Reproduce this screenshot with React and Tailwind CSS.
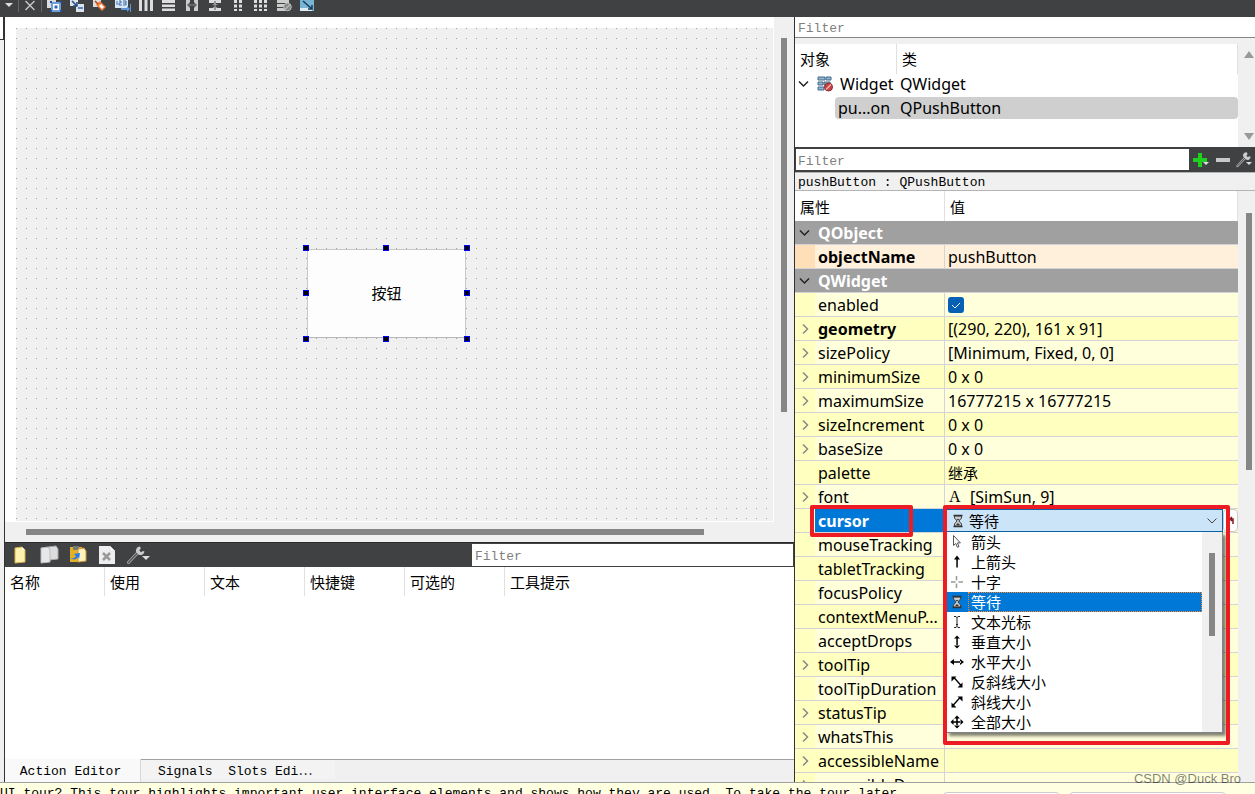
import React, { useState } from 'react';

const objectProps = [{ name: 'objectName', value: 'pushButton', bold: true }];

const widgetProps = [
  { name: 'enabled', type: 'check' },
  { name: 'geometry', value: '[(290, 220), 161 x 91]', bold: true, expandable: true },
  { name: 'sizePolicy', value: '[Minimum, Fixed, 0, 0]', expandable: true },
  { name: 'minimumSize', value: '0 x 0', expandable: true },
  { name: 'maximumSize', value: '16777215 x 16777215', expandable: true },
  { name: 'sizeIncrement', value: '0 x 0', expandable: true },
  { name: 'baseSize', value: '0 x 0', expandable: true },
  { name: 'palette', value: '继承', cjk: true },
  { name: 'font', value: '[SimSun, 9]', type: 'font', expandable: true },
  { name: 'cursor', type: 'cursor', bold: true },
  { name: 'mouseTracking' },
  { name: 'tabletTracking' },
  { name: 'focusPolicy' },
  { name: 'contextMenuP...' },
  { name: 'acceptDrops' },
  { name: 'toolTip', expandable: true },
  { name: 'toolTipDuration' },
  { name: 'statusTip', expandable: true },
  { name: 'whatsThis', expandable: true },
  { name: 'accessibleName', expandable: true },
  { name: 'accessibleD...', expandable: true },
];

const cursors = [
  { label: '箭头', icon: 'arrow' },
  { label: '上箭头', icon: 'up' },
  { label: '十字', icon: 'cross' },
  { label: '等待', icon: 'wait' },
  { label: '文本光标', icon: 'ibeam' },
  { label: '垂直大小', icon: 'vertical' },
  { label: '水平大小', icon: 'horizontal' },
  { label: '反斜线大小', icon: 'backslash' },
  { label: '斜线大小', icon: 'slash' },
  { label: '全部大小', icon: 'all' },
];

const actionColumns = ['名称', '使用', '文本', '快捷键', '可选的', '工具提示'];

const cursorShapes = {
  arrow: <path d="M4.5 1.5v10l2.3-2 1.6 3.8 1.6-.8-1.6-3.6h3z" fill="#fff" stroke="#555" />,
  up: <path d="M7.300 3h1.500v10.500H7.300zM5 5.500l3-4 3 4z" fill="#000" />,
  cross: <path d="M7.500 2v4.500M7.500 9.500v4.500M2 8h4.500M9.500 8h4.500" stroke="#999" strokeWidth="1.500" />,
  wait: (
    <g>
      <path d="M4.500 3v2l2.500 3-2.500 3v2h7v-2L9 8l2.500-3V3z" fill="#c8ccd0" stroke="#444" />
      <path d="M3.500 2.500h9M3.500 13.500h9" stroke="#333" strokeWidth="1.500" />
      <path d="M6.500 6h3L8 7.500zM8 10l2 2H6z" fill="#333" />
    </g>
  ),
  ibeam: <path d="M5 2.500h2l1 1 1-1h2M8 3v10M5 13.500h2l1-1 1 1h2M7 10.500h2" stroke="#222" fill="none" />,
  vertical: <path d="M7.300 4h1.500v8H7.300zM8 1.500l3 3H5zM8 14.500l3-3H5z" fill="#000" />,
  horizontal: <path d="M4 7.200h8v1.600H4zM1 8l4-3v6zM15 8l-4-3v6z" fill="#000" />,
  backslash: <path d="M4 3.500L5 2.500l8 9-1 1zM2.500 2.500h5l-5 5zM13.500 13.500h-5l5-5z" fill="#000" />,
  slash: <path d="M12 3.500L11 2.500l-8 9 1 1zM13.500 2.500h-5l5 5zM2.500 13.500h5l-5-5z" fill="#000" />,
  all: (
    <path
      d="M7.200 4h1.600v8H7.200zM4 7.200h8v1.600H4zM8 1.500l3 3H5zM8 14.500l3-3H5zM1.500 8l3-3v6zM14.500 8l-3-3v6z"
      fill="#000"
    />
  ),
};

function CursorIcon({ name }) {
  return (
    <svg className="h-4 w-4 shrink-0" viewBox="0 0 16 16">
      {cursorShapes[name]}
    </svg>
  );
}

function Chevron({ open }) {
  return (
    <svg className="mx-auto h-3 w-3" viewBox="0 0 12 12" fill="none" strokeWidth="1.500">
      {open ? <path d="M1 3.500L5.500 8 10 3.500" stroke="#222" /> : <path d="M4 1.500L8.500 6 4 10.500" stroke="#888" />}
    </svg>
  );
}

function Wrench() {
  return (
    <svg className="h-5 w-5" viewBox="0 0 20 20">
      <path d="M2.500 17.500l9-9.500" stroke="#aaa" strokeWidth="3" strokeLinecap="round" />
      <path d="M2.500 17.500l9-9.500" stroke="#505050" strokeWidth="1.200" strokeLinecap="round" />
      <path d="M14 1.500a4 4 0 00-3.500 6l2 2a4 4 0 006-3l-1.500-.5-2 1.200-1.700-1.700 1.500-2z" fill="#ccc" />
    </svg>
  );
}

function DownArrow() {
  return (
    <svg className="h-1 w-2" viewBox="0 0 8 4">
      <path d="M0 0h8L4 4z" fill="#ddd" />
    </svg>
  );
}

// Only the lower part of the icons shows, the toolbar is scrolled under the window top
const toolIcons = [
  { label: 'Edit Widgets', draw: <><path d="M1 3h9v9H1z" fill="#ddd" /><path d="M5 6h10v10H5z" fill="#6f9fd8" /><path d="M7 8h6v6H7z" fill="#fff" /><path d="M8.500 9.500h3v3h-3z" fill="#2f63b5" /><path d="M4 5h2v2H4zM14 5h2v2h-2zM4 14h2v2H4zM14 14h2v2h-2z" fill="#2452a0" /></> },
  { label: 'Edit Signals', draw: <><path d="M1 3h8v7H1zM7 8h8v8H7z" fill="#dce3ea" /><path d="M3 5l5 5M8 6v4H4" stroke="#244a87" strokeWidth="1.500" fill="none" /><path d="M9 12h5" stroke="#5787c6" strokeWidth="2" /></> },
  { label: 'Edit Buddies', draw: <><path d="M1 3h8v8H1z" fill="#ddd" /><path d="M8 5l6 6-4 4-6-6z" fill="#f27b35" /><path d="M9 8l3 3-2 2-3-3z" fill="#fff" /><path d="M3 5l3 3" stroke="#b43e1b" strokeWidth="1.500" /></> },
  { label: 'Edit Tab Order', draw: <><path d="M0 3h13v9H0z" fill="#d9e7f5" /><path d="M2 5v4M4 5h2v2H4v2h3M8 5h3v4H8M8 7h3" stroke="#3e70aa" fill="none" /><path d="M6 12h6v-2l3 3-3 3v-2H6zM15 8h1v8h-1z" fill="#5c96d8" /></> },
  { label: 'Lay Out Horizontally', draw: <path d="M1 2h3v13H1zM6.500 2h3v13h-3zM12 2h3v13h-3z" fill="#ddd" /> },
  { label: 'Lay Out Vertically', draw: <path d="M1 4h13v3H1zM1 8.500h13v2.500H1zM1 12.500h13V15H1z" fill="#ddd" /> },
  { label: 'Horizontal Splitter', draw: <><path d="M2 2h4v13H2zM10 2h4v13h-4z" fill="#ccc" /><path d="M3 9l3-3v2h4V6l3 3-3 3v-2H6v2z" fill="#666" /></> },
  { label: 'Vertical Splitter', draw: <><path d="M2 4h12v3H2zM2 12h12v3H2z" fill="#ddd" /><path d="M7 5h2v3h2l-3 2-3-2h2zM7 14h2v-2h2l-3-2-3 2h2z" fill="#999" /></> },
  { label: 'Form Layout', draw: <path d="M4 4h3v3H4zM9 4h3v3H9zM4 8.500h3v3H4zM9 8.500h3v3H9zM4 13h3v2H4zM9 13h3v2H9z" fill="#ddd" /> },
  { label: 'Grid Layout', draw: <path d="M1 4h3v3H1zM6 4h3v3H6zM11 4h3v3h-3zM1 8.500h3v3H1zM6 8.500h3v3H6zM11 8.500h3v3h-3zM1 13h3v2H1zM6 13h3v2H6zM11 13h3v2h-3z" fill="#ddd" /> },
  { label: 'Break Layout', draw: <><path d="M1 4h12v3H1zM1 8h10v3H1zM1 12h9v3H1z" fill="#ccc" /><circle cx="11.500" cy="11" r="3.800" fill="#888" stroke="#bbb" /><path d="M9 13.500l5-5" stroke="#ddd" /></> },
  { label: 'Adjust Size', draw: <><path d="M1 2h14v13H1z" fill="#78b5d5" /><path d="M1 12h12v3H1z" fill="#dceef5" /><path d="M4 5l9 8M13 9v4H9" stroke="#183d58" strokeWidth="1.500" fill="none" /></> },
];

function TopToolbar() {
  return (
    <div className="flex h-[17px] shrink-0 items-start bg-[#404142] pl-[5px]">
      <button type="button" aria-label="More" className="mt-[3px] flex"><DownArrow /></button>
      <span className="ml-[5px] h-3 w-px bg-[#666]" />
      <button type="button" aria-label="Close" className="mx-[5px]">
        <svg className="h-3 w-3" viewBox="0 0 12 12">
          <path d="M1.500 1l9 9M10.500 1l-9 9" stroke="#ccc" strokeWidth="1.300" />
        </svg>
      </button>
      <span className="h-3 w-px bg-[#666]" />
      <div className="ml-1 flex gap-[7px]">
        {toolIcons.map((tool) => (
          <button key={tool.label} type="button" aria-label={tool.label}>
            <svg className="h-3 w-4" viewBox="0 4 16 12">{tool.draw}</svg>
          </button>
        ))}
      </div>
    </div>
  );
}

function FormEditor() {
  const handle = 'absolute h-[6px] w-[6px] border border-[#0000ff] bg-black';
  return (
    <div className="flex min-h-0 flex-1 flex-col bg-[#f0f0f0]">
      <div className="flex min-h-0 flex-1">
        <div className="flex min-w-0 flex-1 bg-white pt-[11px] pr-px pb-px pl-[11px]">
          <div className="relative flex-1 bg-[#f0f0f0] bg-[conic-gradient(at_1px_1px,transparent_75%,#a0a0a0_0)] bg-[length:10px_10px]">
            <div className="absolute top-[220px] left-[290px] flex h-[91px] w-[161px] p-px">
              <button type="button" className="flex-1 border border-[#c8c8c8] border-b-[#b8b8b8] bg-[#fdfdfd] text-[15px]">
                按钮
              </button>
              <span className={`${handle} -top-[3px] -left-[3px]`} />
              <span className={`${handle} -top-[3px] left-[77px]`} />
              <span className={`${handle} -top-[3px] -right-[3px]`} />
              <span className={`${handle} top-[42px] -left-[3px]`} />
              <span className={`${handle} top-[42px] -right-[3px]`} />
              <span className={`${handle} -bottom-[3px] -left-[3px]`} />
              <span className={`${handle} -bottom-[3px] left-[77px]`} />
              <span className={`${handle} -right-[3px] -bottom-[3px]`} />
            </div>
          </div>
        </div>
        <div className="w-5 shrink-0 px-[7px] pt-[21px]">
          <div className="h-[374px] w-[6px] bg-[#868686]" />
        </div>
      </div>
      <div className="h-5 shrink-0 pt-[7px] pr-[90px] pl-[21px]">
        <div className="h-[6px] bg-[#868686]" />
      </div>
    </div>
  );
}

function ActionEditor() {
  return (
    <div className="flex h-[240px] shrink-0 flex-col">
      <div className="flex h-[25px] shrink-0 border-t border-[#2b2b2b] bg-[#404142]">
        <div className="flex flex-1 items-center gap-[9px] pl-[5px]">
          <button type="button" aria-label="New">
            <svg className="h-5 w-5" viewBox="0 0 20 20">
              <path d="M5 3l7-1 3 3v12l-10 1z" fill="#fff1ae" stroke="#d9b44a" />
              <path d="M12 2v3h3z" fill="#fff" />
            </svg>
          </button>
          <button type="button" aria-label="Copy">
            <svg className="h-5 w-5" viewBox="0 0 20 20">
              <path d="M9 2l8-1 2 3v10l-9 1z" fill="#ddd" stroke="#aaa" />
              <path d="M2 3l7-1 2 3v12l-9 1z" fill="#e8e8e8" stroke="#bbb" />
            </svg>
          </button>
          <button type="button" aria-label="Paste">
            <svg className="h-5 w-5" viewBox="0 0 20 20">
              <path d="M2 2h12v15H2z" fill="#e3b128" />
              <path d="M5 1h6v4H5z" fill="#777" />
              <path d="M10 4l6-1 2 3v10l-8 1z" fill="#fff0c0" stroke="#c99a38" />
              <path d="M2 13c3 1 5 0 6-2L6 9l6-1-1 6-1-2c-2 3-5 3-8 1z" fill="#217bea" />
            </svg>
          </button>
          <button type="button" aria-label="Delete">
            <svg className="h-5 w-5" viewBox="0 0 20 20">
              <path d="M2 1h11l5 5v13H2z" fill="#eee" />
              <path d="M13 1v5h5z" fill="#fff" stroke="#ccc" strokeWidth=".5" />
              <path d="M6 8l7 7M13 8l-7 7" stroke="#999" strokeWidth="2.500" />
            </svg>
          </button>
          <button type="button" aria-label="Configure" className="flex items-end">
            <Wrench />
            <span className="-ml-1 flex pb-[5px]"><DownArrow /></span>
          </button>
        </div>
        <input
          type="text"
          aria-label="Filter actions"
          placeholder="Filter"
          className="my-px mr-px w-[321px] bg-white pt-[3px] pl-[3px] font-['Liberation_Mono','Noto_Sans_CJK_SC',monospace] text-[13px] outline-none placeholder:text-[#808080]"
        />
      </div>
      <div className="min-h-0 flex-1 bg-white">
        <table className="w-full table-fixed border-separate border-spacing-0">
          <thead>
            <tr className="h-[29px] text-left text-[15px]">
              {actionColumns.map((column) => (
                <th key={column} className="w-[100px] border-r border-[#e0e0e0] pt-[2px] pl-[5px] font-normal last:w-auto last:border-r-0">
                  {column}
                </th>
              ))}
            </tr>
          </thead>
        </table>
      </div>
      <div className="flex h-[23px] shrink-0 bg-[#f0f0f0] font-['Liberation_Mono','Noto_Sans_CJK_SC',monospace] text-[13px]">
        <button type="button" className="w-[136px] border-r border-[#d9d9d9] bg-[#f9f9f9] pt-[2px] pr-1">Action Editor</button>
        <div className="flex flex-1 border-t border-[#a0a0a0]">
          <button type="button" className="mb-[3px] w-[194px] bg-[#f3f3f3] pt-[2px] pl-[17px] text-left whitespace-pre">
            {'Signals  Slots Edi⋯'}
          </button>
        </div>
      </div>
    </div>
  );
}

function ObjectInspector() {
  return (
    <div className="shrink-0 bg-[#f0f0f0]">
      <input
        type="text"
        aria-label="Filter objects"
        placeholder="Filter"
        className="block h-[21px] w-full border-b border-[#868686] bg-white pt-[2px] pl-[3px] font-['Liberation_Mono','Noto_Sans_CJK_SC',monospace] text-[13px] outline-none placeholder:text-[#808080]"
      />
      <div className="mt-[6px] flex h-[103px]">
        <div className="min-w-0 flex-1 bg-white">
          <table className="w-full table-fixed border-separate border-spacing-0">
            <thead>
              <tr className="h-[30px] text-left text-[15px]">
                <th className="w-[102px] border-r border-[#e0e0e0] pl-[5px] font-normal">对象</th>
                <th className="border-r border-[#e0e0e0] pl-[5px] font-normal">类</th>
              </tr>
            </thead>
            <tbody className="text-[16px] leading-5">
              <tr className="h-[23px] align-top">
                <td>
                  <div className="flex items-center pl-[3px]">
                    <div className="w-3"><Chevron open /></div>
                    <svg className="ml-[7px] h-4 w-4" viewBox="0 0 16 16">
                      <path d="M1 1h7v3H1zM9 1h5v3H9zM1 6h5v3H1zM7 6h6v3H7zM1 11h6v3H1z" fill="#8fb4d2" stroke="#476b8a" />
                      <circle cx="11.500" cy="11" r="4" fill="#c84343" stroke="#8e2c2c" />
                      <path d="M9 13.500l5-5" stroke="#f3b5b5" strokeWidth="1.500" />
                    </svg>
                    <span className="ml-[7px]">Widget</span>
                  </div>
                </td>
                <td className="pl-[3px]">QWidget</td>
              </tr>
              <tr className="h-[22px]">
                <td className="pl-10">
                  <div className="rounded-l-sm bg-[#cfcfcf] py-px pl-[3px]">pu...on</div>
                </td>
                <td>
                  <div className="rounded-r-sm bg-[#cfcfcf] py-px pl-[3px]">QPushButton</div>
                </td>
              </tr>
            </tbody>
          </table>
        </div>
        <div className="flex w-[17px] shrink-0 flex-col items-end justify-between pt-[6px] pb-[6px]">
          <svg className="h-[10px] w-3" viewBox="0 0 12 10"><path d="M1 8l5-7 5 7z" fill="#999" /></svg>
          <svg className="h-[10px] w-3" viewBox="0 0 12 10"><path d="M1 2l5 7 5-7z" fill="#999" /></svg>
        </div>
      </div>
    </div>
  );
}

function CursorEditor() {
  const [cursor, setCursor] = useState('等待');
  const current = cursors.find((item) => item.label === cursor);

  return (
    <div className="flex h-[23px]">
      <div className="relative ml-px w-[277px]">
        <select
          aria-label="cursor"
          value={cursor}
          onChange={(e) => setCursor(e.target.value)}
          className="block h-[23px] w-full appearance-none border border-[#0a62a8] bg-[#cce4f7] pl-[22px] text-[15px] leading-5 outline-none"
        >
          {cursors.map((item) => (
            <option key={item.label}>{item.label}</option>
          ))}
        </select>
        <span className="pointer-events-none absolute inset-y-0 left-1 flex items-center">
          <CursorIcon name={current.icon} />
        </span>
        <svg className="pointer-events-none absolute top-[6px] right-[5px] h-3 w-3" viewBox="0 0 12 12">
          <path d="M1.500 3.500L6 8l4.500-4.500" stroke="#444" fill="none" />
        </svg>
        <div className="absolute top-[23px] left-0 z-10 flex w-full border-r border-b border-[#808488] bg-white shadow-[3px_3px_3px_rgba(0,0,0,0.5)]">
          <ul role="listbox" className="flex-1 text-[15px] leading-5">
            {cursors.map((item) => (
              <li
                key={item.label}
                role="option"
                aria-selected={item.label === cursor}
                onClick={() => setCursor(item.label)}
                className={`flex h-5 items-center pl-[3px] ${item.label === cursor ? 'bg-[#0078d7] text-white' : ''}`}
              >
                <CursorIcon name={item.icon} />
                <span className={`ml-[3px] flex h-5 flex-1 items-center border border-dotted pl-[2px] ${item.label === cursor ? 'border-[#ff8728]' : 'border-transparent'}`}>
                  {item.label}
                </span>
              </li>
            ))}
          </ul>
          <div className="w-5 shrink-0 bg-[#f0f0f0] px-[7px] pt-[21px]">
            <div className="h-[83px] w-[6px] bg-[#868686]" />
          </div>
        </div>
        <div className="pointer-events-none absolute -top-1 -left-[3px] z-20 h-[240px] w-[287px] rounded-xs border-4 border-[#ed1c24]" />
      </div>
      <button type="button" aria-label="Reset" className="flex flex-1 items-center justify-end rounded border border-[#ccc] bg-white">
        <svg className="h-3 w-3" viewBox="0 0 12 12">
          <path d="M3 4h5v5M7 2L5 4l2 2" stroke="#8b1a1a" strokeWidth="1.500" fill="none" />
        </svg>
      </button>
    </div>
  );
}

function PropertyValue({ prop }) {
  if (prop.type === 'check') {
    return (
      <label className="relative block h-4 w-4">
        <input type="checkbox" aria-label={prop.name} defaultChecked className="block h-4 w-4 appearance-none rounded-[3px] bg-[#bbb] checked:bg-[#0560b6]" />
        <svg className="pointer-events-none absolute inset-0 h-4 w-4" viewBox="0 0 16 16">
          <path d="M4 8l3 3 5-5" stroke="#fff" fill="none" />
        </svg>
      </label>
    );
  }
  if (prop.type === 'font') {
    return (
      <div className="flex items-center">
        <span className="w-[22px] pl-px font-['Liberation_Serif','Noto_Sans_CJK_SC',serif]">A</span>
        <span>{prop.value}</span>
      </div>
    );
  }
  return <span className={prop.cjk ? 'text-[15px]' : ''}>{prop.value}</span>;
}

function GroupRow({ name }) {
  return (
    <tr className="h-6 bg-[#a0a0a0] font-bold text-white">
      <td className="border-b border-[#d4d4d8]"><Chevron open /></td>
      <td colSpan={2} className="border-b border-[#d4d4d8] pl-[3px]">{name}</td>
    </tr>
  );
}

function PropertyRow({ prop, tone, indent }) {
  const selected = prop.type === 'cursor';
  return (
    <tr className={`h-6 ${tone}`}>
      <td className={`border-b border-[#d4d4d8] ${indent}`}>{prop.expandable && <Chevron />}</td>
      <td className={`relative border-r border-b border-[#d4d4d8] pl-[3px] whitespace-nowrap ${prop.bold ? 'font-bold' : ''} ${selected ? 'bg-[#0078d7] text-white' : ''}`}>
        {prop.name}
        {selected && (
          <span className="pointer-events-none absolute -top-1 -left-[5px] h-8 w-[103px] rounded-xs border-4 border-[#ed1c24]" />
        )}
      </td>
      <td className={`border-b border-[#d4d4d8] ${selected ? '' : 'pl-[3px]'}`}>
        {selected ? <CursorEditor /> : <PropertyValue prop={prop} />}
      </td>
    </tr>
  );
}

function PropertyEditor() {
  return (
    <div className="flex min-h-0 flex-1 flex-col">
      <div className="flex h-[25px] shrink-0 items-center border-y-2 border-l border-[#404142] bg-[#404142]">
        <input
          type="text"
          aria-label="Filter properties"
          placeholder="Filter"
          className="h-full min-w-0 flex-1 bg-white pt-[3px] pl-[2px] font-['Liberation_Mono','Noto_Sans_CJK_SC',monospace] text-[13px] outline-none placeholder:text-[#808080]"
        />
        <div className="flex w-[66px] shrink-0 items-center gap-[5px] pl-[3px]">
          <button type="button" aria-label="Add property">
            <svg className="h-4 w-[18px]" viewBox="0 0 18 16">
              <path d="M6 1h4v5h5v4h-5v5H6v-5H1V6h5z" fill="#1fd01f" />
              <path d="M11 10h6l-3 3z" fill="#ddd" />
            </svg>
          </button>
          <button type="button" aria-label="Remove property">
            <svg className="h-4 w-4" viewBox="0 0 16 16"><path d="M1 6h14v4H1z" fill="#c8c8c8" /></svg>
          </button>
          <button type="button" aria-label="Configure properties">
            <svg className="h-4 w-4" viewBox="0 0 16 16">
              <path d="M1.500 14L9 6" stroke="#aaa" strokeWidth="2.500" strokeLinecap="round" />
              <path d="M1.500 14L9 6" stroke="#505050" strokeLinecap="round" />
              <path d="M11 .5a3 3 0 00-3 5l2 2a3 3 0 004.500-3L13 4.500 11.500 5l-1-1 1-2z" fill="#ccc" />
              <path d="M10 10h6l-3 3z" fill="#ddd" />
            </svg>
          </button>
        </div>
      </div>
      <div className="flex h-[19px] shrink-0 items-center border-y border-[#b4b4b4] bg-[#f0f0f0] pt-[2px] pl-[3px] font-['Liberation_Mono','Noto_Sans_CJK_SC',monospace] text-[13px] whitespace-pre">
        pushButton : QPushButton
      </div>
      <div className="flex min-h-0 flex-1 overflow-hidden">
        <div className="min-w-0 flex-1 bg-white">
          <table className="w-full table-fixed border-separate border-spacing-0 text-[16px] leading-[22px]">
            <colgroup>
              <col className="w-5" />
              <col className="w-[130px]" />
              <col />
            </colgroup>
            <thead>
              <tr className="h-[30px] text-left text-[15px]">
                <th colSpan={2} className="border-r border-[#e0e0e0] pt-[2px] pl-[5px] font-normal">属性</th>
                <th className="border-r border-[#e0e0e0] pt-[2px] pl-[5px] font-normal">值</th>
              </tr>
            </thead>
            <tbody>
              <GroupRow name="QObject" />
              {objectProps.map((prop) => (
                <PropertyRow key={prop.name} prop={prop} tone="bg-[#fff0dc]" indent="bg-[#ffdfb8]" />
              ))}
              <GroupRow name="QWidget" />
              {widgetProps.map((prop, i) => (
                <PropertyRow key={prop.name} prop={prop} tone={i % 2 ? 'bg-[#ffffbf]' : 'bg-[#ffffdc]'} indent="bg-[#ffffbf]" />
              ))}
            </tbody>
          </table>
        </div>
        <div className="w-[17px] shrink-0 bg-[#f0f0f0] pt-[22px] pl-2">
          <div className="h-[257px] w-[6px] bg-[#868686]" />
        </div>
      </div>
    </div>
  );
}

function App() {
  return (
    <div className="relative flex h-screen flex-col overflow-hidden bg-[#f0f0f0] font-['Noto_Sans','Noto_Sans_CJK_SC',sans-serif] text-black">
      <TopToolbar />
      <div className="flex min-h-0 flex-1">
        <div className="w-[5px] shrink-0 border-r border-[#333]">
          <div className="h-[23px] border-r border-b border-[#333] bg-white" />
        </div>
        <main className="flex min-w-0 flex-1 flex-col">
          <FormEditor />
          <ActionEditor />
        </main>
        <aside className="flex w-[461px] shrink-0 flex-col border-l border-[#333]">
          <ObjectInspector />
          <PropertyEditor />
        </aside>
      </div>
      <div className="flex h-3 shrink-0 overflow-hidden border-t border-[#a0a0a0] bg-[#ffffe1]">
        <p className="min-w-0 flex-1 pt-[3px] font-['Liberation_Mono','Noto_Sans_CJK_SC',monospace] text-[13px] leading-4 whitespace-nowrap">
          UI tour? This tour highlights important user interface elements and shows how they are used. To take the tour later,
        </p>
        <div className="flex shrink-0 items-start gap-[9px] pt-[9px] pr-[29px]">
          <button type="button" aria-label="Take UI Tour" className="h-6 w-[117px] rounded border border-[#ccc] bg-[#fdfdfd]" />
          <button type="button" aria-label="Do Not Show Again" className="h-6 w-[157px] rounded border border-[#ccc] bg-[#fdfdfd]" />
        </div>
      </div>
      <span className="absolute right-[14px] bottom-[7px] font-['Liberation_Sans','Noto_Sans_CJK_SC',sans-serif] text-[13px] leading-4 text-[#00000080]">
        CSDN @Duck Bro
      </span>
    </div>
  );
}

export default App;
